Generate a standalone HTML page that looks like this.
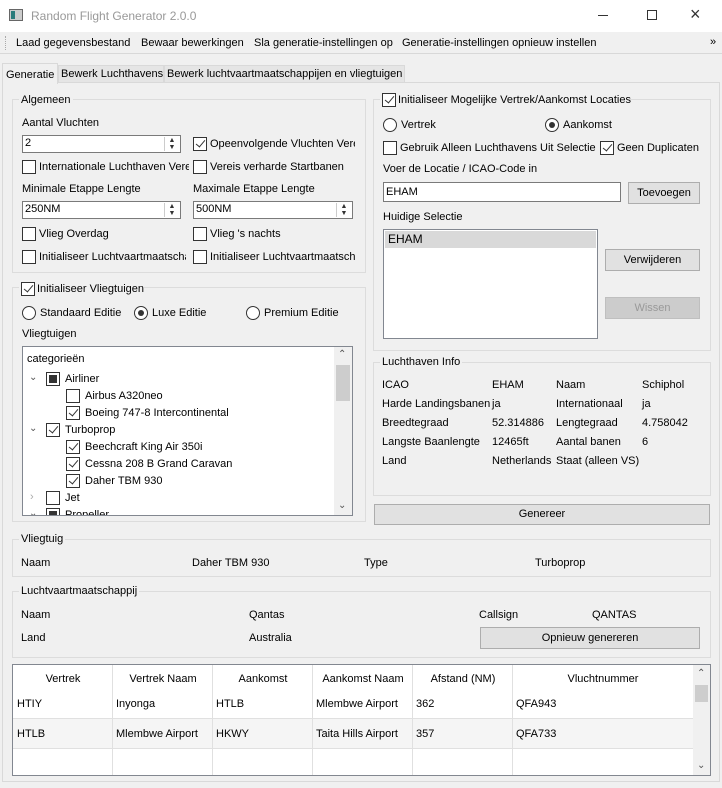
<!DOCTYPE html>
<html><head><meta charset="utf-8"><style>
*{box-sizing:border-box;margin:0;padding:0}
body{width:722px;height:788px;overflow:hidden;background:#f0f0f0;font-family:"Liberation Sans",sans-serif;font-size:11px;color:#000;position:relative}
.a{position:absolute;white-space:nowrap}
.t{position:absolute;white-space:nowrap;line-height:14px}
.g{position:absolute;border:1px solid #dcdcdc}
.gt{position:absolute;background:#f0f0f0;padding:0 2px;line-height:14px;white-space:nowrap}
.cb{position:absolute;width:14px;height:14px;border:1px solid #333;background:#fff}
.cb.c::after{content:"";position:absolute;left:4px;top:0px;width:4px;height:8px;border:solid #333;border-width:0 1.3px 1.3px 0;transform:rotate(40deg)}
.cb.p::after{content:"";position:absolute;left:2px;top:2px;width:8px;height:8px;background:#333}
.rb{position:absolute;width:14px;height:14px;border:1px solid #333;border-radius:50%;background:#fff}
.rb.on::after{content:"";position:absolute;left:3px;top:3px;width:6px;height:6px;border-radius:50%;background:#333}
.in{position:absolute;background:#fff;border:1px solid #7a7a7a;line-height:15px;padding-left:2px;overflow:hidden;white-space:nowrap}
.sp{position:absolute;right:1px;top:1px;width:15px;bottom:1px;border-left:1px solid #ccc;font-size:7px;line-height:7px;text-align:center;color:#333}
.bt{position:absolute;background:#e1e1e1;border:1px solid #adadad;text-align:center;white-space:nowrap}
.clip{overflow:hidden}
</style></head><body>
<!-- title bar -->
<div class="a" style="left:0;top:0;width:722px;height:32px;background:#fff"></div>
<div class="a" style="left:9px;top:9px;width:14px;height:12px;border:1px solid #666;background:#ccc"><div style="position:absolute;left:1px;top:1px;width:4px;height:8px;background:#2a7a7a"></div></div>
<div class="t" style="left:31px;top:9px;font-size:12px;color:#999">Random Flight Generator 2.0.0</div>
<div class="a" style="left:598px;top:15px;width:10px;height:1px;background:#333"></div>
<div class="a" style="left:647px;top:10px;width:10px;height:10px;border:1px solid #333"></div>
<div class="t" style="left:690px;top:7px;font-size:18px;color:#333">×</div>
<!-- menu -->
<div class="a" style="left:0;top:32px;width:722px;height:22px;background:#f0f0f0;border-bottom:1px solid #d8d8d8"></div>
<div class="a" style="left:5px;top:36px;width:2px;height:14px;border-left:1px dotted #aaa"></div>
<div class="t" style="left:16px;top:36px">Laad gegevensbestand</div>
<div class="t" style="left:141px;top:36px">Bewaar bewerkingen</div>
<div class="t" style="left:254px;top:36px">Sla generatie-instellingen op</div>
<div class="t" style="left:402px;top:36px">Generatie-instellingen opnieuw instellen</div>
<div class="t" style="left:710px;top:35px">»</div>
<!-- tabs -->
<div class="a" style="left:2px;top:82px;width:718px;height:700px;border:1px solid #d9d9d9;background:#f0f0f0"></div>
<div class="a" style="left:2px;top:63px;width:56px;height:21px;border:1px solid #d9d9d9;border-bottom:none;background:#f0f0f0"></div>
<div class="t" style="left:6px;top:68px">Generatie</div>
<div class="a" style="left:58px;top:65px;width:106px;height:18px;border:1px solid #d9d9d9;background:#e5e5e5"></div>
<div class="t" style="left:61px;top:67px">Bewerk Luchthavens</div>
<div class="a" style="left:164px;top:65px;width:241px;height:18px;border:1px solid #d9d9d9;background:#e5e5e5"></div>
<div class="t" style="left:167px;top:67px">Bewerk luchtvaartmaatschappijen en vliegtuigen</div>

<!-- Algemeen -->
<div class="g" style="left:12px;top:99px;width:354px;height:174px"></div>
<div class="gt" style="left:19px;top:93px">Algemeen</div>
<div class="t" style="left:22px;top:116px">Aantal Vluchten</div>
<div class="in" style="left:22px;top:135px;width:159px;height:18px">2<div class="sp">▲<br>▼</div></div>
<div class="cb c" style="left:193px;top:137px"></div>
<div class="t clip" style="left:210px;top:137px;width:145px">Opeenvolgende Vluchten Vereist</div>
<div class="cb" style="left:22px;top:160px"></div>
<div class="t clip" style="left:39px;top:160px;width:150px">Internationale Luchthaven Vereist</div>
<div class="cb" style="left:193px;top:160px"></div>
<div class="t" style="left:210px;top:160px">Vereis verharde Startbanen</div>
<div class="t" style="left:22px;top:182px">Minimale Etappe Lengte</div>
<div class="t" style="left:193px;top:182px">Maximale Etappe Lengte</div>
<div class="in" style="left:22px;top:201px;width:159px;height:18px">250NM<div class="sp">▲<br>▼</div></div>
<div class="in" style="left:193px;top:201px;width:160px;height:18px">500NM<div class="sp">▲<br>▼</div></div>
<div class="cb" style="left:22px;top:227px"></div>
<div class="t" style="left:39px;top:227px">Vlieg Overdag</div>
<div class="cb" style="left:193px;top:227px"></div>
<div class="t" style="left:210px;top:227px">Vlieg 's nachts</div>
<div class="cb" style="left:22px;top:250px"></div>
<div class="t clip" style="left:39px;top:250px;width:147px">Initialiseer Luchtvaartmaatschappijen</div>
<div class="cb" style="left:193px;top:250px"></div>
<div class="t clip" style="left:210px;top:250px;width:146px">Initialiseer Luchtvaartmaatschappijen</div>

<!-- Vliegtuigen -->
<div class="g" style="left:12px;top:287px;width:354px;height:235px"></div>
<div class="gt" style="left:19px;top:281px;padding-left:2px;width:125px">&nbsp;</div>
<div class="cb c" style="left:21px;top:282px"></div>
<div class="t" style="left:37px;top:282px">Initialiseer Vliegtuigen</div>
<div class="rb" style="left:22px;top:306px"></div>
<div class="t" style="left:40px;top:306px">Standaard Editie</div>
<div class="rb on" style="left:134px;top:306px"></div>
<div class="t" style="left:152px;top:306px">Luxe Editie</div>
<div class="rb" style="left:246px;top:306px"></div>
<div class="t" style="left:264px;top:306px">Premium Editie</div>
<div class="t" style="left:22px;top:327px">Vliegtuigen</div>
<div class="a" style="left:22px;top:346px;width:331px;height:170px;background:#fff;border:1px solid #828790;overflow:hidden">
 <div class="a" style="left:311px;top:0;width:18px;height:168px;background:#f0f0f0"></div>
 <div class="t" style="left:315px;top:1px;font-size:10px;color:#555">⌃</div>
 <div class="a" style="left:313px;top:18px;width:14px;height:36px;background:#cdcdcd"></div>
 <div class="t" style="left:315px;top:152px;font-size:10px;color:#555">⌄</div>
 <div class="t" style="left:4px;top:5px">categorieën</div>
 <div class="t" style="left:6px;top:24px;color:#555;font-size:10px">⌄</div>
 <div class="cb p" style="left:23px;top:25px"></div><div class="t" style="left:42px;top:25px">Airliner</div>
 <div class="cb" style="left:43px;top:42px"></div><div class="t" style="left:62px;top:42px">Airbus A320neo</div>
 <div class="cb c" style="left:43px;top:59px"></div><div class="t" style="left:62px;top:59px">Boeing 747-8 Intercontinental</div>
 <div class="t" style="left:6px;top:75px;color:#555;font-size:10px">⌄</div>
 <div class="cb c" style="left:23px;top:76px"></div><div class="t" style="left:42px;top:76px">Turboprop</div>
 <div class="cb c" style="left:43px;top:93px"></div><div class="t" style="left:62px;top:93px">Beechcraft King Air 350i</div>
 <div class="cb c" style="left:43px;top:110px"></div><div class="t" style="left:62px;top:110px">Cessna 208 B Grand Caravan</div>
 <div class="cb c" style="left:43px;top:127px"></div><div class="t" style="left:62px;top:127px">Daher TBM 930</div>
 <div class="t" style="left:7px;top:143px;color:#aaa">›</div>
 <div class="cb" style="left:23px;top:144px"></div><div class="t" style="left:42px;top:144px">Jet</div>
 <div class="t" style="left:6px;top:160px;color:#555;font-size:10px">⌄</div>
 <div class="cb p" style="left:23px;top:161px"></div><div class="t" style="left:42px;top:161px">Propeller</div>
</div>

<!-- right locations -->
<div class="g" style="left:373px;top:99px;width:338px;height:252px"></div>
<div class="gt" style="left:380px;top:92px;width:250px">&nbsp;</div>
<div class="cb c" style="left:382px;top:93px"></div>
<div class="t" style="left:398px;top:93px">Initialiseer Mogelijke Vertrek/Aankomst Locaties</div>
<div class="rb" style="left:383px;top:118px"></div>
<div class="t" style="left:401px;top:118px">Vertrek</div>
<div class="rb on" style="left:545px;top:118px"></div>
<div class="t" style="left:563px;top:118px">Aankomst</div>
<div class="cb" style="left:383px;top:141px"></div>
<div class="t" style="left:400px;top:141px">Gebruik Alleen Luchthavens Uit Selectie</div>
<div class="cb c" style="left:600px;top:141px"></div>
<div class="t" style="left:617px;top:141px">Geen Duplicaten</div>
<div class="t" style="left:383px;top:162px">Voer de Locatie / ICAO-Code in</div>
<div class="in" style="left:383px;top:182px;width:238px;height:20px;line-height:18px">EHAM</div>
<div class="bt" style="left:628px;top:182px;width:72px;height:22px;line-height:20px">Toevoegen</div>
<div class="t" style="left:383px;top:210px">Huidige Selectie</div>
<div class="a" style="left:383px;top:229px;width:215px;height:110px;background:#fff;border:1px solid #828790">
 <div class="a" style="left:1px;top:1px;width:211px;height:17px;background:#d9d9d9;line-height:17px;padding-left:3px;font-size:12px">EHAM</div>
</div>
<div class="bt" style="left:605px;top:249px;width:95px;height:22px;line-height:20px">Verwijderen</div>
<div class="bt" style="left:605px;top:297px;width:95px;height:22px;line-height:20px;color:#999;background:#ccc;border-color:#bfbfbf">Wissen</div>

<!-- Luchthaven Info -->
<div class="g" style="left:373px;top:362px;width:338px;height:134px"></div>
<div class="gt" style="left:380px;top:355px">Luchthaven Info</div>
<div class="t" style="left:382px;top:378px">ICAO</div><div class="t" style="left:492px;top:378px">EHAM</div><div class="t" style="left:556px;top:378px">Naam</div><div class="t" style="left:642px;top:378px">Schiphol</div>
<div class="t" style="left:382px;top:397px">Harde Landingsbanen</div><div class="t" style="left:492px;top:397px">ja</div><div class="t" style="left:556px;top:397px">Internationaal</div><div class="t" style="left:642px;top:397px">ja</div>
<div class="t" style="left:382px;top:416px">Breedtegraad</div><div class="t" style="left:492px;top:416px">52.314886</div><div class="t" style="left:556px;top:416px">Lengtegraad</div><div class="t" style="left:642px;top:416px">4.758042</div>
<div class="t" style="left:382px;top:435px">Langste Baanlengte</div><div class="t" style="left:492px;top:435px">12465ft</div><div class="t" style="left:556px;top:435px">Aantal banen</div><div class="t" style="left:642px;top:435px">6</div>
<div class="t" style="left:382px;top:454px">Land</div><div class="t" style="left:492px;top:454px">Netherlands</div><div class="t" style="left:556px;top:454px">Staat (alleen VS)</div>
<div class="bt" style="left:374px;top:504px;width:336px;height:21px;line-height:19px">Genereer</div>

<!-- Vliegtuig -->
<div class="g" style="left:12px;top:539px;width:699px;height:38px"></div>
<div class="gt" style="left:19px;top:532px">Vliegtuig</div>
<div class="t" style="left:21px;top:556px">Naam</div><div class="t" style="left:192px;top:556px">Daher TBM 930</div><div class="t" style="left:364px;top:556px">Type</div><div class="t" style="left:535px;top:556px">Turboprop</div>

<!-- Luchtvaartmaatschappij -->
<div class="g" style="left:12px;top:591px;width:699px;height:67px"></div>
<div class="gt" style="left:19px;top:584px">Luchtvaartmaatschappij</div>
<div class="t" style="left:21px;top:608px">Naam</div><div class="t" style="left:249px;top:608px">Qantas</div><div class="t" style="left:479px;top:608px">Callsign</div><div class="t" style="left:592px;top:608px">QANTAS</div>
<div class="t" style="left:21px;top:631px">Land</div><div class="t" style="left:249px;top:631px">Australia</div>
<div class="bt" style="left:480px;top:627px;width:220px;height:22px;line-height:20px">Opnieuw genereren</div>

<!-- table -->
<div class="a" style="left:12px;top:664px;width:699px;height:112px;background:#fff;border:1px solid #828790;overflow:hidden">
 <div class="a" style="left:0;top:54px;width:680px;height:29px;background:#f5f5f5"></div>
 <div class="a" style="left:0;top:53px;width:680px;height:1px;background:#e0e0e0"></div>
 <div class="a" style="left:0;top:83px;width:680px;height:1px;background:#e0e0e0"></div>
 <div class="a" style="left:99px;top:0;width:1px;height:112px;background:#e0e0e0"></div>
 <div class="a" style="left:199px;top:0;width:1px;height:112px;background:#e0e0e0"></div>
 <div class="a" style="left:299px;top:0;width:1px;height:112px;background:#e0e0e0"></div>
 <div class="a" style="left:399px;top:0;width:1px;height:112px;background:#e0e0e0"></div>
 <div class="a" style="left:499px;top:0;width:1px;height:112px;background:#e0e0e0"></div>
 <div class="a" style="left:680px;top:0;width:17px;height:110px;background:#f0f0f0"></div>
 <div class="t" style="left:684px;top:2px;font-size:10px;color:#555">⌃</div>
 <div class="a" style="left:682px;top:20px;width:13px;height:17px;background:#cdcdcd"></div>
 <div class="t" style="left:684px;top:94px;font-size:10px;color:#555">⌄</div>
 <div class="t" style="left:0;top:7px;width:100px;text-align:center">Vertrek</div>
 <div class="t" style="left:100px;top:7px;width:100px;text-align:center">Vertrek Naam</div>
 <div class="t" style="left:200px;top:7px;width:100px;text-align:center">Aankomst</div>
 <div class="t" style="left:300px;top:7px;width:100px;text-align:center">Aankomst Naam</div>
 <div class="t" style="left:400px;top:7px;width:100px;text-align:center">Afstand (NM)</div>
 <div class="t" style="left:500px;top:7px;width:180px;text-align:center">Vluchtnummer</div>
 <div class="t" style="left:4px;top:32px">HTIY</div><div class="t" style="left:103px;top:32px">Inyonga</div><div class="t" style="left:203px;top:32px">HTLB</div><div class="t" style="left:303px;top:32px">Mlembwe Airport</div><div class="t" style="left:403px;top:32px">362</div><div class="t" style="left:503px;top:32px">QFA943</div>
 <div class="t" style="left:4px;top:62px">HTLB</div><div class="t clip" style="left:103px;top:62px;width:96px">Mlembwe Airport</div><div class="t" style="left:203px;top:62px">HKWY</div><div class="t clip" style="left:303px;top:62px;width:96px">Taita Hills Airport</div><div class="t" style="left:403px;top:62px">357</div><div class="t" style="left:503px;top:62px">QFA733</div>
</div>
</body></html>
